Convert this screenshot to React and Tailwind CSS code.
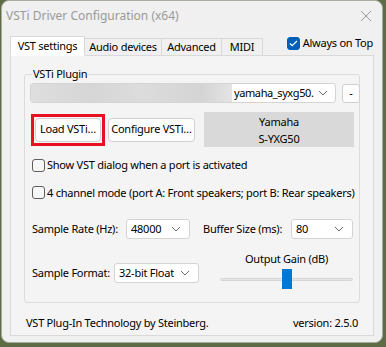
import { useState } from "react";

const font = { fontFamily: '"Segoe UI", "Noto Sans", sans-serif' };

function Chevron({ className = "" }) {
  return (
    <svg width="10" height="6" viewBox="0 0 10 6" className={`shrink-0 ${className}`}>
      <path d="M1 1l4 4 4-4" fill="none" stroke="#6b6b6b" strokeWidth="1" />
    </svg>
  );
}

function Select({ value, width }) {
  return (
    <div
      className={`${width} shrink-0 h-[20px] bg-white border border-[#d4d4d4] rounded-[3px] flex items-center justify-between pl-[4px] pr-[8px] text-black`}
    >
      <span>{value}</span>
      <Chevron />
    </div>
  );
}

function Check({ checked, onChange }) {
  return (
    <button
      onClick={onChange}
      className={`w-[13px] h-[13px] rounded-[3px] flex items-center justify-center shrink-0 ${
        checked ? "bg-[#005fb8] border border-[#005fb8]" : "bg-[#f7f7f7] border border-[#5f5f5f]"
      }`}
    >
      {checked && (
        <svg width="9" height="7" viewBox="0 0 9 7">
          <path d="M1 3.5l2.2 2.2L8 1" fill="none" stroke="white" strokeWidth="1.2" />
        </svg>
      )}
    </button>
  );
}

export default function App() {
  const [onTop, setOnTop] = useState(true);
  const [showDlg, setShowDlg] = useState(false);
  const [fourCh, setFourCh] = useState(false);
  const [tab, setTab] = useState("VST settings");

  const tabs = [
    { name: "VST settings", w: "w-[75px]" },
    { name: "Audio devices", w: "w-[78px]" },
    { name: "Advanced", w: "w-[61px]" },
    { name: "MIDI", w: "w-[42px]" },
  ];

  return (
    <div className="w-[386px] h-[347px] bg-[#5e6b45] overflow-hidden whitespace-nowrap" style={font}>
      <div className="ml-[1px] w-[382px] h-[343px] bg-[#f0f0f0] rounded-[8px] border border-[#a9ad9c] flex flex-col text-[11px] tracking-[-0.25px] text-black">
        {/* title bar */}
        <div className="h-[29px] flex items-center justify-between pl-[4px] pr-[10px] shrink-0">
          <span className="text-[12px] tracking-normal text-[#9a9a9a] mt-[1px]">VSTi Driver Configuration (x64)</span>
          <svg width="12" height="12" viewBox="0 0 12 12">
            <path d="M1 1l10 10M11 1L1 11" stroke="#9a9a9a" strokeWidth="1" />
          </svg>
        </div>

        {/* tabs row */}
        <div className="flex items-end justify-between h-[26px] pl-[8px] pr-[9px] shrink-0">
          <div className="flex items-end shrink-0">
            {tabs.map((t) => (
              <button
                key={t.name}
                onClick={() => setTab(t.name)}
                className={`${t.w} shrink-0 border border-[#d9d9d9] -mr-px leading-[16px] ${
                  tab === t.name
                    ? "bg-white h-[20px] border-b-white relative z-10 pb-[1px]"
                    : "bg-[#f0f0f0] h-[18px]"
                }`}
              >
                {t.name}
              </button>
            ))}
          </div>
          <div className="flex items-center gap-[3px] self-start mt-[5px] shrink-0">
            <Check checked={onTop} onChange={() => setOnTop(!onTop)} />
            <span>Always on Top</span>
          </div>
        </div>

        {/* tab panel */}
        <div className="mx-[8px] h-[281px] border border-[#d9d9d9] bg-[#f4f4f4] -mt-px flex flex-col">
          {/* group box */}
          <div className="mt-[18px] mx-[13px] h-[229px] border border-[#dcdcdc] rounded-[3px] relative px-[5px]">
            <span className="absolute -top-[9px] left-[7px] px-[1px] bg-[#f4f4f4]">VSTi Plugin</span>

            <div className="flex items-center gap-[6px] mt-[8px]">
              <div className="w-[306px] shrink-0 h-[20px] bg-white border border-[#d4d4d4] rounded-[3px] flex items-center pr-[7px] overflow-hidden">
                <div className="w-[201px] h-full bg-[linear-gradient(90deg,#dedede,#d6d6d6_30%,#dcdcdc_55%,#d4d4d4_85%,#e4e4e4)] shrink-0" />
                <span className="flex-1 min-w-0 pl-[2px] tracking-[-0.4px]">yamaha_syxg50.</span>
                <Chevron className="ml-[3px]" />
              </div>
              <div className="w-[18px] shrink-0 h-[19px] bg-[#fdfdfd] border border-[#d0d0d0] rounded-[3px] flex items-center justify-center leading-none pb-[2px]">
                -
              </div>
            </div>

            <div className="flex items-center mt-[9px] ml-[1px]">
              <div className="border-[3px] border-[#e81123] p-px shrink-0">
                <button className="w-[66px] h-[24px] bg-[#fdfdfd] border border-[#d0d0d0] rounded-[4px]">Load VSTi…</button>
              </div>
              <button className="ml-[3px] w-[87px] shrink-0 h-[24px] bg-[#fdfdfd] border border-[#d0d0d0] rounded-[4px]">
                Configure VSTi…
              </button>
              <div className="ml-[9px] w-[150px] shrink-0 h-[35px] bg-[#d9d9d9] flex flex-col items-center justify-center leading-[17px]">
                <span>Yamaha</span>
                <span>S-YXG50</span>
              </div>
            </div>

            <div className="flex items-center gap-[2px] mt-[10px] ml-[2px]">
              <Check checked={showDlg} onChange={() => setShowDlg(!showDlg)} />
              <span>Show VST dialog when a port is activated</span>
            </div>
            <div className="flex items-center gap-[2px] mt-[11px] ml-[2px]">
              <Check checked={fourCh} onChange={() => setFourCh(!fourCh)} />
              <span>4 channel mode (port A: Front speakers; port B: Rear speakers)</span>
            </div>

            <div className="flex items-center mt-[18px] ml-[2px]">
              <span className="w-[94px] shrink-0">Sample Rate (Hz):</span>
              <Select value="48000" width="w-[64px]" />
              <span className="ml-[13px] w-[88px] shrink-0">Buffer Size (ms):</span>
              <Select value="80" width="w-[62px]" />
            </div>

            <div className="flex items-start mt-[8px] ml-[2px]">
              <div className="flex items-center mt-[16px] shrink-0">
                <span className="w-[82px] shrink-0">Sample Format:</span>
                <Select value="32-bit Float" width="w-[85px]" />
              </div>
              <div className="ml-[21px] w-[133px] shrink-0 flex flex-col items-center">
                <span className="mt-[4px] leading-[16px]">Output Gain (dB)</span>
                <div className="w-full h-[20px] relative mt-[2px] flex items-center">
                  <div className="w-full h-[3px] bg-[#e6e6e6] border border-[#d6d6d6] rounded-full" />
                  <div className="absolute left-[62px] top-0 w-[10px] h-[20px] bg-[#0078d4]" />
                </div>
              </div>
            </div>
          </div>

          <div className="flex justify-between items-center mx-[15px] mt-[12px]">
            <span>VST Plug-In Technology by Steinberg.</span>
            <span>version: 2.5.0</span>
          </div>
        </div>
      </div>
    </div>
  );
}
